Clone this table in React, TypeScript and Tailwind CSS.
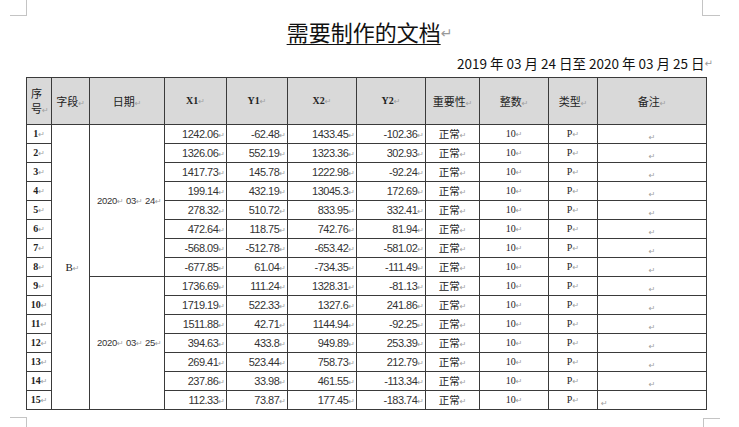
import clsx from "clsx";

const rows: string[][] = [
  ["1242.06", "-62.48", "1433.45", "-102.36"],
  ["1326.06", "552.19", "1323.36", "302.93"],
  ["1417.73", "145.78", "1222.98", "-92.24"],
  ["199.14", "432.19", "13045.3", "172.69"],
  ["278.32", "510.72", "833.95", "332.41"],
  ["472.64", "118.75", "742.76", "81.94"],
  ["-568.09", "-512.78", "-653.42", "-581.02"],
  ["-677.85", "61.04", "-734.35", "-111.49"],
  ["1736.69", "111.24", "1328.31", "-81.13"],
  ["1719.19", "522.33", "1327.6", "241.86"],
  ["1511.88", "42.71", "1144.94", "-92.25"],
  ["394.63", "433.8", "949.89", "253.39"],
  ["269.41", "523.44", "758.73", "212.79"],
  ["237.86", "33.98", "461.55", "-113.34"],
  ["112.33", "73.87", "177.45", "-183.74"],
];

const Ret = ({ className }: { className?: string }) => (
  <span className={clsx("text-[8px] leading-none font-normal tracking-normal text-[#a0a0a0] [font-family:'DejaVu_Sans',sans-serif]", className)}>↵</span>
);

const cell = "border border-[#3a3a3a] p-0 leading-[16px] whitespace-nowrap overflow-hidden";
const num = "text-right pr-[1px] text-[11px] tracking-[-0.5px] text-[#333] [font-family:'Liberation_Sans',sans-serif]";
const serif = "text-center text-[10px] text-[#222] [font-family:'Liberation_Serif','Noto_Sans_CJK_SC',serif]";
const cjk = "text-[11px] font-normal text-[#222] [font-family:'Noto_Sans_CJK_SC',serif]";

export default function App() {
  return (
    <div className="relative w-[739px] h-[427px] bg-white overflow-hidden">
      {/* page corner marks */}
      <div className="absolute left-[10px] top-0 w-[17px] h-[16px] border-r border-b border-[#c4c4c4]" />
      <div className="absolute left-[702px] top-0 w-[18px] h-[16px] border-l border-b border-[#c4c4c4]" />
      <div className="absolute left-[10px] top-[417px] w-[17px] h-[12px] border-r border-t border-[#c4c4c4]" />
      <div className="absolute left-[703px] top-[418px] w-[17px] h-[12px] border-l border-t border-[#c4c4c4]" />

      <div className="flex justify-center items-end pt-[14px] h-[46px] [font-family:'Noto_Sans_CJK_SC',sans-serif]">
        <span className="text-[22px] leading-[30px] underline underline-offset-[3px] decoration-1 text-[#111]">需要制作的文档</span>
        <span className="text-[14px] leading-[26px] text-[#999] [font-family:'DejaVu_Sans',sans-serif]">↵</span>
      </div>

      <div className="flex justify-end pr-[26px] mt-[7px] h-[20px] items-center text-[13.5px] text-[#111] [font-family:'Noto_Sans_CJK_SC',sans-serif]">
        <span>2019 年 03 月 24 日至 2020 年 03 月 25 日</span>
        <span className="text-[10px] text-[#999] [font-family:'DejaVu_Sans',sans-serif]">↵</span>
      </div>

      <table className="ml-[26px] mt-[4px] border-collapse table-fixed w-[680px]">
        <colgroup>
          <col className="w-[25px]" />
          <col className="w-[38px]" />
          <col className="w-[75px]" />
          <col className="w-[62px]" />
          <col className="w-[61px]" />
          <col className="w-[69px]" />
          <col className="w-[69px]" />
          <col className="w-[54px]" />
          <col className="w-[69px]" />
          <col className="w-[49px]" />
          <col className="w-[109px]" />
        </colgroup>
        <thead>
          <tr className="h-[47px] bg-[#d9d9d9]">
            <th className={clsx("border border-[#3a3a3a] p-0 text-left pl-[4px] leading-[15px]", cjk)}>
              <div>序</div>
              <div>号<Ret /></div>
            </th>
            {["字段", "日期"].map((h) => (
              <th key={h} className={clsx(cell, cjk)}>
                {h}<Ret />
              </th>
            ))}
            {["X1", "Y1", "X2", "Y2"].map((h) => (
              <th key={h} className={clsx(cell, "text-[10px] font-bold text-[#222] [font-family:'Liberation_Serif',serif]")}>
                {h}<Ret />
              </th>
            ))}
            {["重要性", "整数", "类型", "备注"].map((h) => (
              <th key={h} className={clsx(cell, cjk)}>
                {h}<Ret />
              </th>
            ))}
          </tr>
        </thead>
        <tbody>
          {rows.map((r, i) => (
            <tr key={i} className="h-[19px]">
              <td className={clsx(cell, serif, "font-bold")}>
                {i + 1}<Ret />
              </td>
              {i === 0 && (
                <td rowSpan={15} className={clsx(cell, serif, "align-middle pl-[4px]")}>
                  <span className="text-[11px]">B</span><Ret />
                </td>
              )}
              {(i === 0 || i === 8) && (
                <td rowSpan={i === 0 ? 8 : 7} className={clsx(cell, "pl-[7px] text-left text-[9.5px] tracking-[-0.3px] text-[#333] [font-family:'Liberation_Sans',sans-serif]")}>
                  2020<Ret /> <span>03</span><Ret /> <span>{i === 0 ? "24" : "25"}</span><Ret />
                </td>
              )}
              {r.map((v, j) => (
                <td key={j} className={clsx(cell, num)}>
                  {v}<Ret />
                </td>
              ))}
              <td className={clsx(cell, "text-center text-[10.5px] text-[#222] [font-family:'Noto_Sans_CJK_SC',sans-serif]")}>
                正常<Ret />
              </td>
              <td className={clsx(cell, serif)}>
                10<Ret />
              </td>
              <td className={clsx(cell, serif)}>
                P<Ret />
              </td>
              <td className={clsx(cell, i === 14 ? "text-left pl-[3px]" : "text-center")}>
                <Ret />
              </td>
            </tr>
          ))}
        </tbody>
      </table>
    </div>
  );
}
